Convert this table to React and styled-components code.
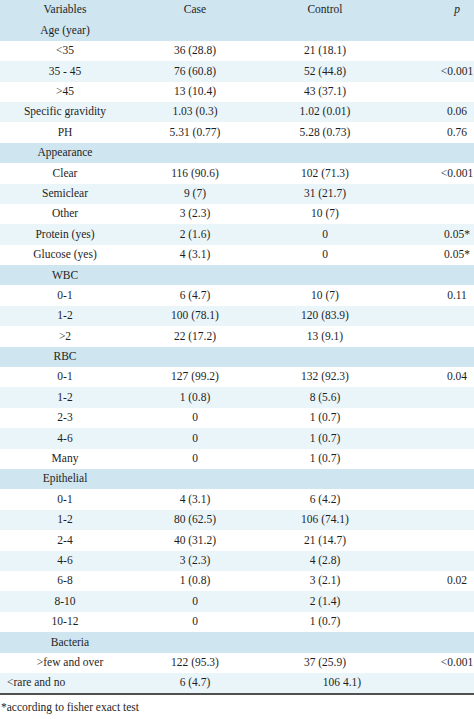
import React from "react";
import styled, { createGlobalStyle } from "styled-components";

const GlobalStyle = createGlobalStyle`
  html, body {
    margin: 0;
    padding: 0;
    background: #ffffff;
  }
  body {
    font-family: "Liberation Serif", "Times New Roman", serif;
    color: #1e1e1e;
    overflow: hidden;
  }
`;

const Page = styled.div`
  width: 474px;
  height: 719px;
  overflow: hidden;
`;

const Table = styled.div`
  display: flex;
  flex-direction: column;
  border-bottom: 2px solid #505050;
`;

const rowColors = {
  head: "#cfe5f0",
  section: "#cfe5f0",
  stripe: "#eaf5fa",
  plain: "#ffffff",
};

const Row = styled.div`
  display: grid;
  grid-template-columns: 130px 130px 130px 84px;
  align-items: center;
  height: 20.4px;
  background: ${(p) => rowColors[p.$kind]};
  font-size: 11.5px;
  line-height: 1;
`;

const Cell = styled.div`
  text-align: ${(p) => (p.$left ? "left" : "center")};
  padding-left: ${(p) => p.$pad || 0}px;
  white-space: nowrap;
`;

const PCell = styled(Cell)`
  padding-left: 50px;
  font-style: ${(p) => (p.$italic ? "italic" : "normal")};
`;

const Footnote = styled.p`
  margin: 0;
  padding: 7px 0 0 1px;
  font-size: 11.5px;
  line-height: 1;
`;

const rows = [
  { kind: "section", label: "Age (year)" },
  { kind: "plain", label: "<35", c: "36 (28.8)", k: "21 (18.1)" },
  { kind: "stripe", label: "35 - 45", c: "76 (60.8)", k: "52 (44.8)", p: "<0.001" },
  { kind: "plain", label: ">45", c: "13 (10.4)", k: "43 (37.1)" },
  { kind: "stripe", label: "Specific gravidity", c: "1.03 (0.3)", k: "1.02 (0.01)", p: "0.06" },
  { kind: "plain", label: "PH", c: "5.31 (0.77)", k: "5.28 (0.73)", p: "0.76" },
  { kind: "section", label: "Appearance" },
  { kind: "plain", label: "Clear", c: "116 (90.6)", k: "102 (71.3)", p: "<0.001" },
  { kind: "stripe", label: "Semiclear", c: "9 (7)", k: "31 (21.7)" },
  { kind: "plain", label: "Other", c: "3 (2.3)", k: "10 (7)" },
  { kind: "stripe", label: "Protein (yes)", c: "2 (1.6)", k: "0", p: "0.05*" },
  { kind: "plain", label: "Glucose (yes)", c: "4 (3.1)", k: "0", p: "0.05*" },
  { kind: "section", label: "WBC" },
  { kind: "plain", label: "0-1", c: "6 (4.7)", k: "10 (7)", p: "0.11" },
  { kind: "stripe", label: "1-2", c: "100 (78.1)", k: "120 (83.9)" },
  { kind: "plain", label: ">2", c: "22 (17.2)", k: "13 (9.1)" },
  { kind: "section", label: "RBC" },
  { kind: "plain", label: "0-1", c: "127 (99.2)", k: "132 (92.3)", p: "0.04" },
  { kind: "stripe", label: "1-2", c: "1 (0.8)", k: "8 (5.6)" },
  { kind: "plain", label: "2-3", c: "0", k: "1 (0.7)" },
  { kind: "stripe", label: "4-6", c: "0", k: "1 (0.7)" },
  { kind: "plain", label: "Many", c: "0", k: "1 (0.7)" },
  { kind: "section", label: "Epithelial" },
  { kind: "plain", label: "0-1", c: "4 (3.1)", k: "6 (4.2)" },
  { kind: "stripe", label: "1-2", c: "80 (62.5)", k: "106 (74.1)" },
  { kind: "plain", label: "2-4", c: "40 (31.2)", k: "21 (14.7)" },
  { kind: "stripe", label: "4-6", c: "3 (2.3)", k: "4 (2.8)" },
  { kind: "plain", label: "6-8", c: "1 (0.8)", k: "3 (2.1)", p: "0.02" },
  { kind: "stripe", label: "8-10", c: "0", k: "2 (1.4)" },
  { kind: "plain", label: "10-12", c: "0", k: "1 (0.7)" },
  { kind: "section", label: "Bacteria", pad: 10 },
  { kind: "plain", label: ">few and over", c: "122 (95.3)", k: "37 (25.9)", p: "<0.001", pad: 10 },
  { kind: "stripe", label: "<rare and no", c: "6 (4.7)", k: "106 4.1)", left: true, pad: 7, kpad: 34 },
];

export default function App() {
  return (
    <Page>
      <GlobalStyle />
      <Table>
        <Row $kind="head">
          <Cell>Variables</Cell>
          <Cell>Case</Cell>
          <Cell>Control</Cell>
          <PCell $italic>p</PCell>
        </Row>
        {rows.map((r, i) => (
          <Row key={i} $kind={r.kind}>
            <Cell $left={r.left} $pad={r.pad}>{r.label}</Cell>
            <Cell>{r.c}</Cell>
            <Cell $pad={r.kpad}>{r.k}</Cell>
            <PCell>{r.p}</PCell>
          </Row>
        ))}
      </Table>
      <Footnote>*according to fisher exact test</Footnote>
    </Page>
  );
}
